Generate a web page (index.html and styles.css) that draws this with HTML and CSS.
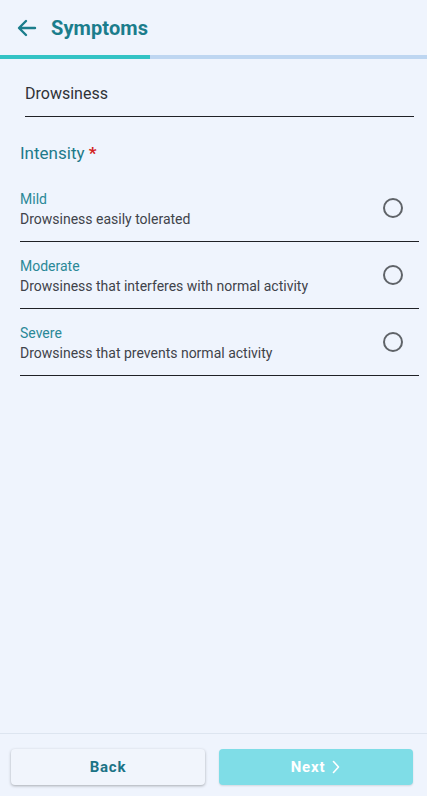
FILE: index.html
```html
<!DOCTYPE html>
<html>
<head>
<meta charset="utf-8">
<link rel="stylesheet" href="styles.css">
</head>
<body>
<div class="app">
  <header class="header">
    <svg class="back-icon" width="24" height="24" viewBox="0 0 24 24"><path d="M20 12H5M11 5l-7 7 7 7" fill="none" stroke="#1b7d8c" stroke-width="2.4" stroke-linecap="round" stroke-linejoin="round"/></svg>
    <h1 class="title">Symptoms</h1>
  </header>
  <div class="progress"><div class="progress-fill"></div></div>
  <main class="content">
    <div class="field">Drowsiness</div>
    <div class="section-label">Intensity <span class="req">*</span></div>
    <div class="options">
      <div class="option">
        <div class="option-text">
          <div class="option-title">Mild</div>
          <div class="option-desc">Drowsiness easily tolerated</div>
        </div>
        <span class="radio"></span>
      </div>
      <div class="option">
        <div class="option-text">
          <div class="option-title">Moderate</div>
          <div class="option-desc">Drowsiness that interferes with normal activity</div>
        </div>
        <span class="radio"></span>
      </div>
      <div class="option">
        <div class="option-text">
          <div class="option-title">Severe</div>
          <div class="option-desc">Drowsiness that prevents normal activity</div>
        </div>
        <span class="radio"></span>
      </div>
    </div>
  </main>
  <footer class="footer">
    <button class="btn btn-back">Back</button>
    <button class="btn btn-next">Next <svg width="10" height="14" viewBox="0 0 10 14"><path d="M2.5 1.5l5 5.5-5 5.5" fill="none" stroke="#fff" stroke-width="1.6" stroke-linecap="round" stroke-linejoin="round"/></svg></button>
  </footer>
</div>
</body>
</html>
```
FILE: styles.css
```css
* { box-sizing: border-box; }
html, body { margin: 0; padding: 0; }
body {
  background: #eff4fd;
  font-family: Roboto, "Noto Sans", sans-serif;
}
.app {
  height: 796px;
  display: flex;
  flex-direction: column;
}
.header {
  height: 55px;
  display: flex;
  align-items: center;
  padding-left: 15px;
  padding-top: 1px;
}
.back-icon { display: block; }
.title {
  margin: 0 0 0 12px;
  font-size: 20px;
  font-weight: 700;
  color: #1b7d8c;
  letter-spacing: 0.1px;
}
.progress {
  height: 4px;
  background: #bed6f1;
}
.progress-fill {
  width: 150px;
  height: 100%;
  background: #33c3c5;
}
.content {
  flex: 1;
  padding: 0 8px 0 20px;
}
.field {
  margin: 23px 5px 0 5px;
  height: 35px;
  font-size: 16px;
  color: #2f3237;
  border-bottom: 1px solid #1f2126;
  padding-top: 2px;
}
.section-label {
  margin-top: 24px;
  line-height: 24px;
  font-size: 17px;
  color: #1d7a8a;
}
.req { color: #d32020; font-weight: 700; }
.options { margin-top: 10px; }
.option {
  display: flex;
  align-items: center;
  justify-content: space-between;
  padding: 14px 0 12px;
  border-bottom: 1px solid #1f2126;
}
.option-title {
  font-size: 14px;
  line-height: 20px;
  color: #2a8897;
}
.option-desc {
  font-size: 14px;
  line-height: 20px;
  color: #3f434a;
}
.radio {
  width: 20px;
  height: 20px;
  border: 2px solid #5f6368;
  border-radius: 50%;
  margin-right: 16px;
  margin-bottom: 2px;
}
.footer {
  border-top: 1px solid #dde5f0;
  padding: 15px 14px 11px 11px;
  display: flex;
  gap: 14px;
}
.btn {
  flex: 1;
  height: 36px;
  border: none;
  border-radius: 4px;
  font-family: Roboto, sans-serif;
  font-size: 15px;
  font-weight: 700;
  letter-spacing: 0.8px;
  display: flex;
  align-items: center;
  justify-content: center;
  gap: 6px;
}
.btn-back {
  background: #f1f5fc;
  color: #1b7386;
  box-shadow: 0 1px 3px rgba(0,0,0,0.3);
}
.btn-next {
  background: #7fdde7;
  color: #ffffff;
  box-shadow: 0 1px 2px rgba(0,0,0,0.12);
}
```
